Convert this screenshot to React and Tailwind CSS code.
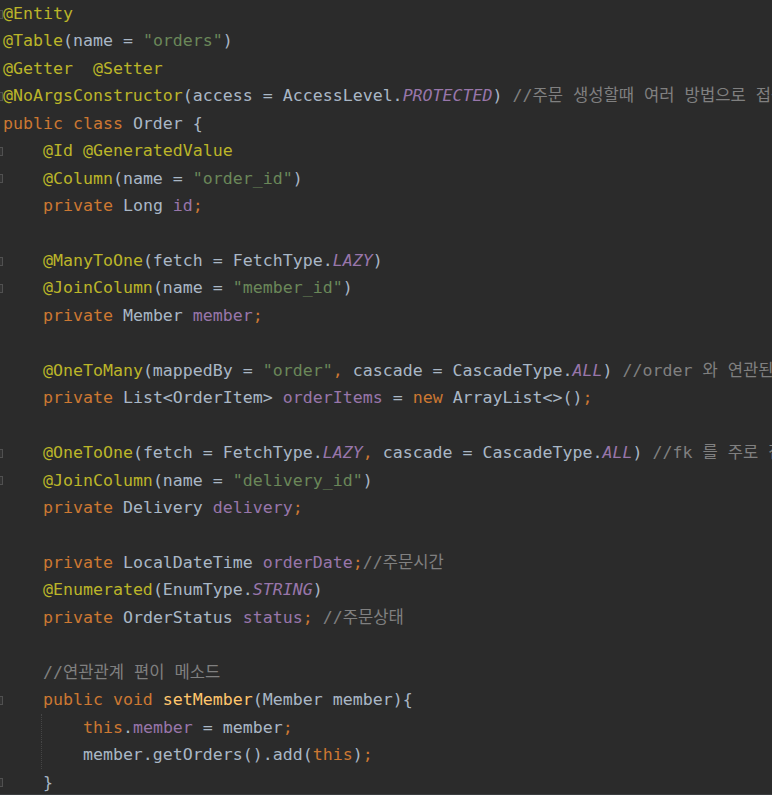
import React from 'react'

// Darcula token colours
const C = {
  a: 'text-[#bbb529]',
  k: 'text-[#cc7832]',
  s: 'text-[#6a8759]',
  t: 'text-[#a9b7c6]',
  f: 'text-[#9876aa]',
  c: 'text-[#9876aa] italic',
  m: 'text-[#808080]',
  d: 'text-[#ffc66d]',
}

const LINES = [
  { fold: true, tokens: [['a', '@Entity']] },
  { tokens: [['a', '@Table'], ['t', '(name = '], ['s', '"orders"'], ['t', ')']] },
  { tokens: [['a', '@Getter  @Setter']] },
  {
    fold: true,
    tokens: [
      ['a', '@NoArgsConstructor'], ['t', '(access = AccessLevel.'], ['c', 'PROTECTED'], ['t', ') '],
      ['m', '//주문 생성할때 여러 방법으로 접근하는 것을 막기 위해'],
    ],
  },
  { tokens: [['k', 'public class '], ['t', 'Order {']] },
  { fold: true, tokens: [['t', '    '], ['a', '@Id @GeneratedValue']] },
  { fold: true, tokens: [['t', '    '], ['a', '@Column'], ['t', '(name = '], ['s', '"order_id"'], ['t', ')']] },
  { tokens: [['t', '    '], ['k', 'private '], ['t', 'Long '], ['f', 'id'], ['k', ';']] },
  { tokens: [] },
  { fold: true, tokens: [['t', '    '], ['a', '@ManyToOne'], ['t', '(fetch = FetchType.'], ['c', 'LAZY'], ['t', ')']] },
  { fold: true, tokens: [['t', '    '], ['a', '@JoinColumn'], ['t', '(name = '], ['s', '"member_id"'], ['t', ')']] },
  { tokens: [['t', '    '], ['k', 'private '], ['t', 'Member '], ['f', 'member'], ['k', ';']] },
  { tokens: [] },
  {
    tokens: [
      ['t', '    '], ['a', '@OneToMany'], ['t', '(mappedBy = '], ['s', '"order"'], ['k', ', '],
      ['t', 'cascade = CascadeType.'], ['c', 'ALL'], ['t', ') '], ['m', '//order 와 연관된 데이터를 함께 처리'],
    ],
  },
  {
    tokens: [
      ['t', '    '], ['k', 'private '], ['t', 'List<OrderItem> '], ['f', 'orderItems'], ['t', ' = '],
      ['k', 'new '], ['t', 'ArrayList<>()'], ['k', ';'],
    ],
  },
  { tokens: [] },
  {
    fold: true,
    tokens: [
      ['t', '    '], ['a', '@OneToOne'], ['t', '(fetch = FetchType.'], ['c', 'LAZY'], ['k', ', '],
      ['t', 'cascade = CascadeType.'], ['c', 'ALL'], ['t', ') '], ['m', '//fk 를 주로 접근하는 곳에 둔다'],
    ],
  },
  { fold: true, tokens: [['t', '    '], ['a', '@JoinColumn'], ['t', '(name = '], ['s', '"delivery_id"'], ['t', ')']] },
  { tokens: [['t', '    '], ['k', 'private '], ['t', 'Delivery '], ['f', 'delivery'], ['k', ';']] },
  { tokens: [] },
  {
    tokens: [
      ['t', '    '], ['k', 'private '], ['t', 'LocalDateTime '], ['f', 'orderDate'], ['k', ';'], ['m', '//주문시간'],
    ],
  },
  { tokens: [['t', '    '], ['a', '@Enumerated'], ['t', '(EnumType.'], ['c', 'STRING'], ['t', ')']] },
  {
    tokens: [
      ['t', '    '], ['k', 'private '], ['t', 'OrderStatus '], ['f', 'status'], ['k', '; '], ['m', '//주문상태'],
    ],
  },
  { tokens: [] },
  { tokens: [['t', '    '], ['m', '//연관관계 편이 메소드']] },
  {
    fold: true,
    tokens: [['t', '    '], ['k', 'public void '], ['d', 'setMember'], ['t', '(Member member){']],
  },
  {
    guide: true,
    tokens: [['t', '        '], ['k', 'this'], ['t', '.'], ['f', 'member'], ['t', ' = member'], ['k', ';']],
  },
  {
    guide: true,
    tokens: [['t', '        member.getOrders().add('], ['k', 'this'], ['t', ')'], ['k', ';']],
  },
  { fold: true, tokens: [['t', '    }']] },
]

function CodeLine({ line }) {
  return (
    <div className="relative flex h-[27.46px] items-center whitespace-pre">
      <div className="flex w-[3px] shrink-0 items-center overflow-hidden">
        {line.fold && (
          <div className="ml-[-6px] h-[9px] w-[9px] shrink-0 border border-[#505050] bg-[#333333]" />
        )}
      </div>
      {line.guide && (
        <div className="absolute inset-y-0 left-[41px] w-0 border-l border-dotted border-[#454545]" />
      )}
      {line.tokens.map(([kind, text], i) => (
        <span key={i} className={C[kind]}>
          {text}
        </span>
      ))}
    </div>
  )
}

export default function App() {
  return (
    <div className="flex h-[795px] w-full flex-col overflow-hidden bg-[#2b2b2b]">
      <div
        className="flex-1 overflow-hidden text-[16.6px] leading-none"
        style={{ fontFamily: '"DejaVu Sans Mono", "Liberation Mono", "Noto Sans CJK KR", monospace' }}
      >
        <div className="mt-[0.5px]">
          {LINES.map((line, i) => (
            <CodeLine key={i} line={line} />
          ))}
        </div>
      </div>
      <div className="h-px shrink-0 bg-[#3a3d3f]" />
    </div>
  )
}
